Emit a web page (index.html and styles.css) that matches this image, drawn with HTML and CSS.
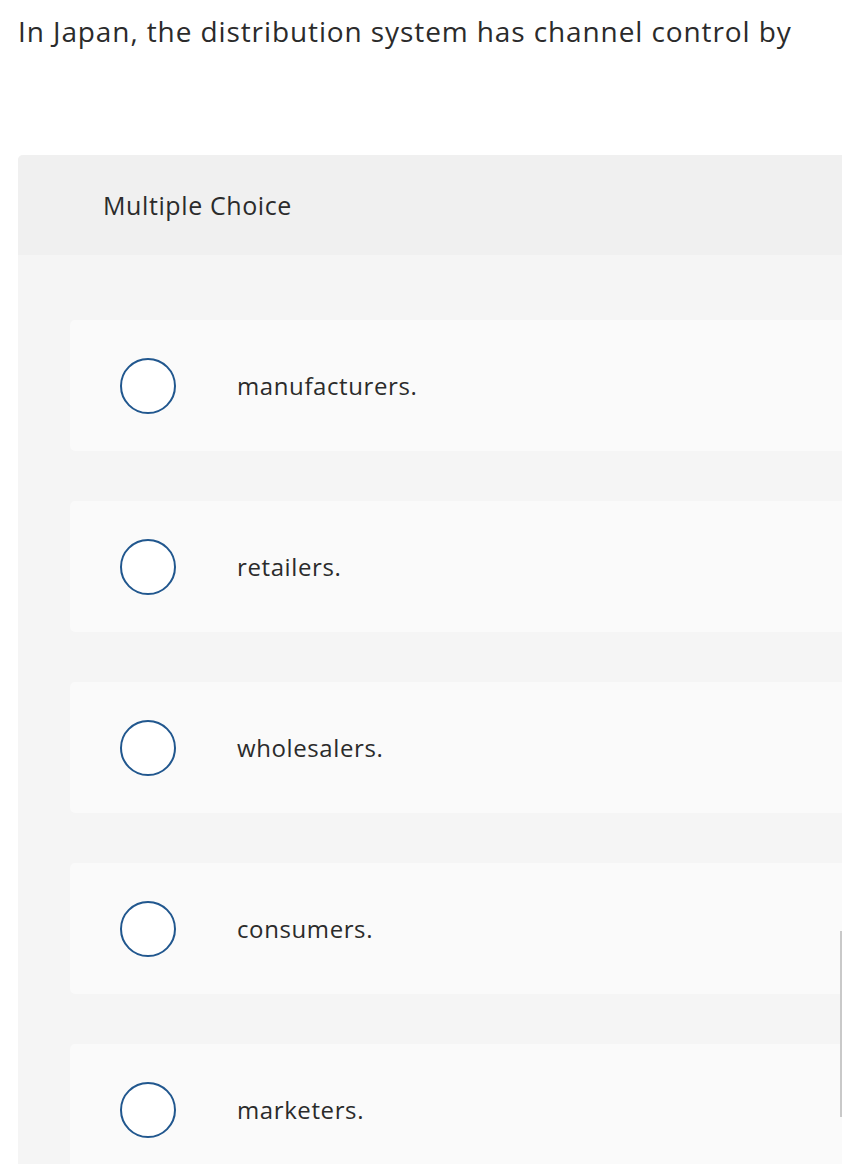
FILE: index.html
```html
<!DOCTYPE html>
<html lang="en">
<head>
<meta charset="utf-8">
<title>Multiple Choice</title>
<link rel="stylesheet" href="styles.css">
</head>
<body>
<div class="page">
  <p class="question">In Japan, the distribution system has channel control by</p>
  <section class="panel">
    <header class="panel-head">Multiple Choice</header>
    <div class="panel-body">
      <label class="option"><span class="radio"></span><span class="label">manufacturers.</span></label>
      <label class="option"><span class="radio"></span><span class="label">retailers.</span></label>
      <label class="option"><span class="radio"></span><span class="label">wholesalers.</span></label>
      <label class="option"><span class="radio"></span><span class="label">consumers.</span></label>
      <label class="option"><span class="radio"></span><span class="label">marketers.</span></label>
    </div>
  </section>
  <div class="scroll-edge"></div>
</div>
</body>
</html>
```

FILE: styles.css
```css
html, body {
  margin: 0;
  padding: 0;
  background: #ffffff;
  overflow: hidden;
}
body {
  font-family: "Open Sans", "Lato", sans-serif;
  color: #2b2b2b;
}
.page {
  position: relative;
  width: 842px;
  height: 1164px;
  overflow: hidden;
}
.question {
  margin: 0;
  padding: 14px 0 0 18px;
  font-size: 28px;
  line-height: 34px;
  letter-spacing: 0.9px;
  white-space: nowrap;
}
.panel {
  margin: 107px 0 0 18px;
  width: 900px;
  border-radius: 5px 0 0 0;
  background: #f5f5f5;
  overflow: hidden;
}
.panel-head {
  height: 100px;
  background: #f0f0f0;
  display: flex;
  align-items: center;
  padding-left: 85px;
  font-size: 25px;
  letter-spacing: 0.6px;
}
.panel-body {
  padding: 65px 0 0 52px;
  display: flex;
  flex-direction: column;
  gap: 50px;
}
.option {
  height: 131px;
  background: #fafafa;
  border-radius: 5px 0 0 5px;
  display: flex;
  align-items: center;
  padding-left: 50px;
}
.radio {
  box-sizing: border-box;
  width: 56px;
  height: 56px;
  border-radius: 50%;
  border: 2px solid #21578e;
  background: #ffffff;
  flex: none;
}
.label {
  margin-left: 61px;
  font-size: 24px;
  letter-spacing: 0.6px;
}
.scroll-edge {
  position: absolute;
  right: 0;
  top: 931px;
  width: 2px;
  height: 186px;
  background: #c9c9c9;
}
```
